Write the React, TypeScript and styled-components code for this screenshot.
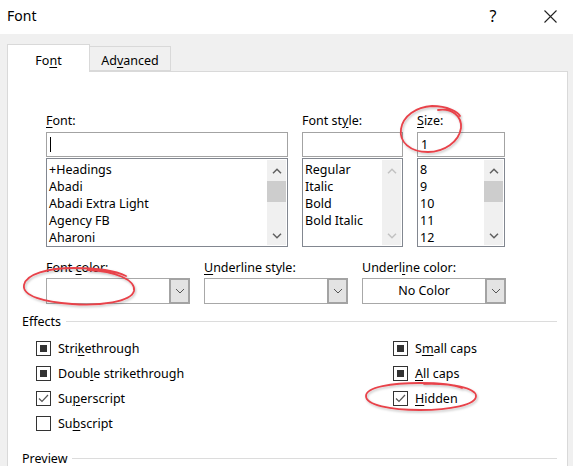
import React from 'react';
import styled, { createGlobalStyle } from 'styled-components';

const Global = createGlobalStyle`
  html, body { margin: 0; padding: 0; background: #f0f0f0; }
  body {
    font-family: "Noto Sans", "Open Sans", sans-serif;
    font-size: 12.5px;
    color: #000;
    overflow: hidden;
  }
  u { text-decoration-thickness: 1px; text-underline-offset: 2px; }
`;

const Window = styled.div`
  position: relative;
  width: 573px;
  height: 466px;
  overflow: hidden;
  display: flex;
  flex-direction: column;
  background: #f0f0f0;
`;

const TitleBar = styled.div`
  height: 34px;
  flex: none;
  background: #fff;
  display: flex;
  align-items: center;
  padding-left: 7px;
`;

const Title = styled.div`
  flex: 1;
  font-size: 14px;
  line-height: 20px;
  padding-bottom: 2px;
`;

const TitleButton = styled.div<{ $gap?: number }>`
  width: 46px;
  height: 34px;
  display: flex;
  align-items: center;
  justify-content: center;
  margin-right: ${(p) => p.$gap ?? 0}px;
  font-size: 16px;
  padding-bottom: 2px;
  box-sizing: border-box;
`;

const Body = styled.div`
  flex: 1;
  display: flex;
  flex-direction: column;
  padding: 10px 5px 0 7px;
  min-height: 0;
`;

const TabRow = styled.div`
  display: flex;
  align-items: flex-end;
  height: 27px;
  flex: none;
`;

const Tab = styled.div<{ $active?: boolean }>`
  box-sizing: border-box;
  display: flex;
  align-items: center;
  justify-content: center;
  border: 1px solid #d9d9d9;
  border-bottom: ${(p) => (p.$active ? 'none' : '1px solid #d9d9d9')};
  border-left: ${(p) => (p.$active ? '1px solid #d9d9d9' : 'none')};
  background: ${(p) => (p.$active ? '#fff' : '#f0f0f0')};
  width: ${(p) => (p.$active ? 83 : 81)}px;
  height: ${(p) => (p.$active ? 28 : 25)}px;
  margin-bottom: ${(p) => (p.$active ? -1 : 0)}px;
  padding-top: ${(p) => (p.$active ? 3 : 4)}px;
  position: relative;
  z-index: ${(p) => (p.$active ? 1 : 0)};
`;

const Panel = styled.div`
  flex: 1;
  background: #fff;
  border: 1px solid #d9d9d9;
  border-bottom: none;
  display: flex;
  flex-direction: column;
`;

const TopSection = styled.div`
  padding: 40px 0 0 38px;
  display: grid;
  grid-template-columns: 242px 101px 88px;
  column-gap: 14px;
`;

const Field = styled.div`
  display: flex;
  flex-direction: column;
`;

const Label = styled.div<{ $mb?: number }>`
  line-height: 17px;
  height: 17px;
  margin-bottom: ${(p) => p.$mb ?? 3}px;
  white-space: nowrap;
`;

const TextInput = styled.div`
  box-sizing: border-box;
  height: 25px;
  border: 1px solid #a3a3a3;
  display: flex;
  align-items: center;
  padding-left: 3px;
  padding-bottom: 1px;
`;

const Caret = styled.span`
  display: inline-block;
  width: 1px;
  height: 15px;
  background: #000;
`;

const List = styled.div`
  box-sizing: border-box;
  height: 89px;
  margin-top: 1px;
  border: 1px solid #828790;
  display: flex;
  overflow: hidden;
`;

const Items = styled.div`
  flex: 1;
  padding: 2px 0 0 2px;
  overflow: hidden;
`;

const Item = styled.div`
  line-height: 17px;
  height: 17px;
  white-space: nowrap;
`;

const ScrollTrack = styled.div`
  width: 19px;
  margin: 1px;
  background: #f0f0f0;
  display: flex;
  flex-direction: column;
`;

const ScrollBtn = styled.div<{ $h: number }>`
  height: ${(p) => p.$h}px;
  display: flex;
  align-items: center;
  justify-content: center;
`;

const Thumb = styled.div`
  height: 21px;
  background: #cdcdcd;
`;

const Fill = styled.div`
  flex: 1;
`;

const SecondRow = styled.div`
  padding: 12px 0 0 38px;
  display: grid;
  grid-template-columns: 144px 144px 144px;
  column-gap: 14px;
`;

const Combo = styled.div`
  box-sizing: border-box;
  height: 26px;
  border: 1px solid #a8a8a8;
  display: flex;
`;

const ComboText = styled.div`
  flex: 1;
  display: flex;
  align-items: center;
  justify-content: center;
  padding-bottom: 1px;
`;

const ComboButton = styled.div`
  box-sizing: border-box;
  width: 21px;
  margin: -1px -1px -1px 0;
  border: 2px solid #a3a3a3;
  background: #e3e3e3;
  display: flex;
  align-items: center;
  justify-content: center;
`;

const Section = styled.div<{ $mt: number }>`
  padding: 0 10px 0 14px;
  margin-top: ${(p) => p.$mt}px;
`;

const SectionHeader = styled.div`
  display: flex;
  align-items: center;
  height: 17px;
  line-height: 17px;
`;

const Rule = styled.div`
  flex: 1;
  height: 1px;
  background: #dcdcdc;
  margin-left: 5px;
`;

const Effects = styled.div`
  margin-top: 6px;
  padding-left: 14px;
  display: grid;
  grid-template-columns: 357px 1fr;
  grid-auto-rows: 25px;
`;

const CheckRow = styled.div<{ $col: number; $row: number }>`
  grid-column: ${(p) => p.$col};
  grid-row: ${(p) => p.$row};
  display: flex;
  align-items: center;
  gap: 7px;
`;

const Box = styled.div`
  box-sizing: border-box;
  width: 15px;
  height: 15px;
  border: 1px solid #333;
  background: #fff;
  display: flex;
  align-items: center;
  justify-content: center;
`;

const Fillsq = styled.div`
  width: 7px;
  height: 7px;
  background: #333;
`;

const Overlay = styled.svg`
  position: absolute;
  left: 0;
  top: 0;
  pointer-events: none;
`;

const Chevron = ({ dir, color }: { dir: 'up' | 'down'; color: string }) => (
  <svg width="10" height="6" viewBox="0 0 10 6">
    <path
      d={dir === 'up' ? 'M1 5.2 L5 1.2 L9 5.2' : 'M1 0.8 L5 4.8 L9 0.8'}
      fill="none"
      stroke={color}
      strokeWidth="1.5"
    />
  </svg>
);

const Scrollbar = ({ disabled }: { disabled?: boolean }) => {
  const c = disabled ? '#c2c2c2' : '#606060';
  return (
    <ScrollTrack>
      <ScrollBtn $h={21}>
        <Chevron dir="up" color={c} />
      </ScrollBtn>
      {!disabled && <Thumb />}
      <Fill />
      <ScrollBtn $h={19}>
        <Chevron dir="down" color={c} />
      </ScrollBtn>
    </ScrollTrack>
  );
};

const SmallChevron = () => (
  <svg width="10" height="6" viewBox="0 0 10 6">
    <path d="M1 1 L5 5 L9 1" fill="none" stroke="#555" strokeWidth="1" />
  </svg>
);

type CB = { label: React.ReactNode; state: 'mixed' | 'checked' | 'off'; col: number; row: number };

const Check = ({ state }: { state: CB['state'] }) => (
  <Box>
    {state === 'mixed' && <Fillsq />}
    {state === 'checked' && (
      <svg width="13" height="13" viewBox="0 0 13 13">
        <path d="M2 6.5 L5 9.5 L11 3" fill="none" stroke="#555" strokeWidth="1.2" />
      </svg>
    )}
  </Box>
);

const checks: CB[] = [
  { label: <>Stri<u>k</u>ethrough</>, state: 'mixed', col: 1, row: 1 },
  { label: <>Doub<u>l</u>e strikethrough</>, state: 'mixed', col: 1, row: 2 },
  { label: <>Su<u>p</u>erscript</>, state: 'checked', col: 1, row: 3 },
  { label: <>Su<u>b</u>script</>, state: 'off', col: 1, row: 4 },
  { label: <>S<u>m</u>all caps</>, state: 'mixed', col: 2, row: 1 },
  { label: <><u>A</u>ll caps</>, state: 'mixed', col: 2, row: 2 },
  { label: <><u>H</u>idden</>, state: 'checked', col: 2, row: 3 },
];

export default function App() {
  return (
    <>
      <Global />
      <Window>
        <TitleBar>
          <Title>Font</Title>
          <TitleButton $gap={11}>?</TitleButton>
          <TitleButton>
            <svg width="13" height="13" viewBox="0 0 13 13">
              <path d="M0.5 0.5 L12.5 12.5 M12.5 0.5 L0.5 12.5" stroke="#222" strokeWidth="1.1" />
            </svg>
          </TitleButton>
        </TitleBar>
        <Body>
          <TabRow>
            <Tab $active>
              Fo<u>n</u>t
            </Tab>
            <Tab>
              Ad<u>v</u>anced
            </Tab>
          </TabRow>
          <Panel>
            <TopSection>
              <Field>
                <Label>
                  <u>F</u>ont:
                </Label>
                <TextInput>
                  <Caret />
                </TextInput>
                <List>
                  <Items>
                    {['+Headings', 'Abadi', 'Abadi Extra Light', 'Agency FB', 'Aharoni'].map((t) => (
                      <Item key={t}>{t}</Item>
                    ))}
                  </Items>
                  <Scrollbar />
                </List>
              </Field>
              <Field>
                <Label>
                  Font st<u>y</u>le:
                </Label>
                <TextInput />
                <List>
                  <Items>
                    {['Regular', 'Italic', 'Bold', 'Bold Italic'].map((t) => (
                      <Item key={t}>{t}</Item>
                    ))}
                  </Items>
                  <Scrollbar disabled />
                </List>
              </Field>
              <Field>
                <Label>
                  <u>S</u>ize:
                </Label>
                <TextInput>1</TextInput>
                <List>
                  <Items>
                    {['8', '9', '10', '11', '12'].map((t) => (
                      <Item key={t}>{t}</Item>
                    ))}
                  </Items>
                  <Scrollbar />
                </List>
              </Field>
            </TopSection>
            <SecondRow>
              <Field>
                <Label $mb={2}>
                  Font <u>c</u>olor:
                </Label>
                <Combo>
                  <ComboText />
                  <ComboButton>
                    <SmallChevron />
                  </ComboButton>
                </Combo>
              </Field>
              <Field>
                <Label $mb={2}>
                  <u>U</u>nderline style:
                </Label>
                <Combo>
                  <ComboText />
                  <ComboButton>
                    <SmallChevron />
                  </ComboButton>
                </Combo>
              </Field>
              <Field>
                <Label $mb={2}>
                  Underl<u>i</u>ne color:
                </Label>
                <Combo>
                  <ComboText>No Color</ComboText>
                  <ComboButton>
                    <SmallChevron />
                  </ComboButton>
                </Combo>
              </Field>
            </SecondRow>
            <Section $mt={9}>
              <SectionHeader>
                Effects
                <Rule />
              </SectionHeader>
              <Effects>
                {checks.map((c, i) => (
                  <CheckRow key={i} $col={c.col} $row={c.row}>
                    <Check state={c.state} />
                    <span>{c.label}</span>
                  </CheckRow>
                ))}
              </Effects>
            </Section>
            <Section $mt={14}>
              <SectionHeader>
                Preview
                <Rule />
              </SectionHeader>
            </Section>
          </Panel>
        </Body>
        <Overlay width="573" height="466" viewBox="0 0 573 466">
          <defs>
            <filter id="sh" x="-20%" y="-20%" width="140%" height="140%">
              <feDropShadow dx="1" dy="1.5" stdDeviation="1.2" floodColor="#000" floodOpacity="0.25" />
            </filter>
          </defs>
          <g fill="none" stroke="#e8424a" strokeWidth="1.8" strokeLinecap="round" filter="url(#sh)">
            <path d="M438 110 C452 108 462 116 461 128 C459 142 444 152 428 152 C410 152 399 142 401 129 C403 116 416 107 432 106 C448 106 458 112 460 116" />
            <path d="M88 270 C115 271 136 280 134 291 C131 302 100 306 72 304 C44 302 22 296 24 285 C26 274 48 268 74 268 C100 268 118 272 126 276" />
            <path d="M424 384 C452 383 476 388 476 396 C476 405 450 410 420 410 C390 410 366 405 366 396 C366 387 392 383 420 383 C440 383 455 385 462 388" />
          </g>
        </Overlay>
      </Window>
    </>
  );
}
